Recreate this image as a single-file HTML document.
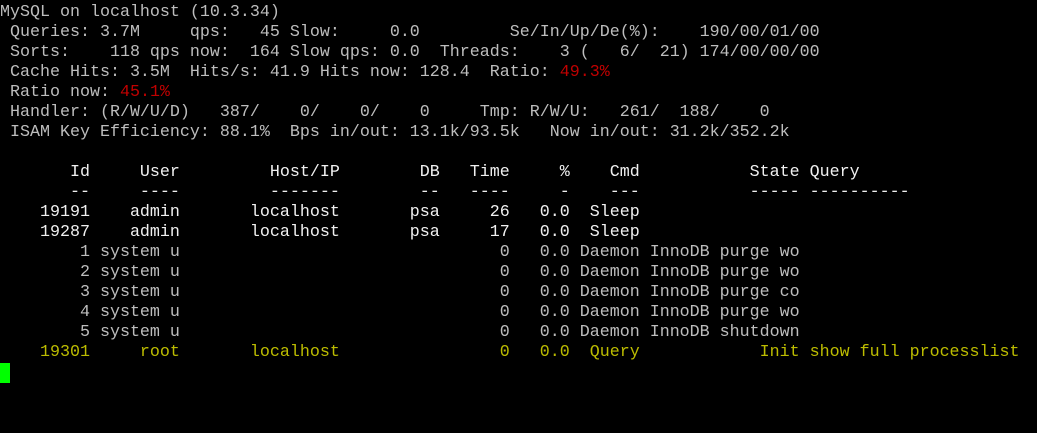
<!DOCTYPE html>
<html><head><meta charset="utf-8"><style>
html,body{margin:0;padding:0;background:#000;width:1037px;height:433px;overflow:hidden}
pre{margin:0;position:absolute;left:0;top:3px;font-family:"Liberation Mono",monospace;font-size:16.67px;line-height:20px;color:#bdbdbd}
.b{color:#f0f0f0}
.r{color:#c00000}
.y{color:#bcbc00}
.cur{position:absolute;left:0;top:363px;width:10px;height:20px;background:#00ff00}
</style></head><body>
<pre>MySQL on localhost (10.3.34)
 Queries: 3.7M     qps:   45 Slow:     0.0         Se/In/Up/De(%):    190/00/01/00
 Sorts:    118 qps now:  164 Slow qps: 0.0  Threads:    3 (   6/  21) 174/00/00/00
 Cache Hits: 3.5M  Hits/s: 41.9 Hits now: 128.4  Ratio: <span class="r">49.3%</span>
 Ratio now: <span class="r">45.1%</span>
 Handler: (R/W/U/D)   387/    0/    0/    0     Tmp: R/W/U:   261/  188/    0
 ISAM Key Efficiency: 88.1%  Bps in/out: 13.1k/93.5k   Now in/out: 31.2k/352.2k

<span class="b">       Id     User         Host/IP        DB   Time     %    Cmd           State Query</span>
<span class="b">       --     ----         -------        --   ----     -    ---           ----- ----------</span>
<span class="b">    19191    admin       localhost       psa     26   0.0  Sleep</span>
<span class="b">    19287    admin       localhost       psa     17   0.0  Sleep</span>
        1 system u                                0   0.0 Daemon InnoDB purge wo
        2 system u                                0   0.0 Daemon InnoDB purge wo
        3 system u                                0   0.0 Daemon InnoDB purge co
        4 system u                                0   0.0 Daemon InnoDB purge wo
        5 system u                                0   0.0 Daemon InnoDB shutdown
<span class="y">    19301     root       localhost                0   0.0  Query            Init show full processlist</span>
</pre>
<div class="cur"></div>
</body></html>
